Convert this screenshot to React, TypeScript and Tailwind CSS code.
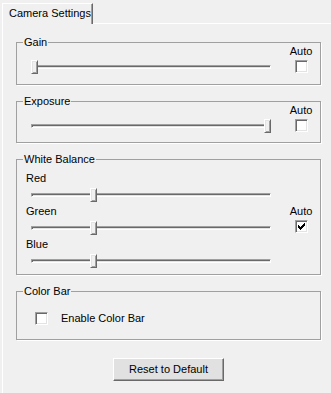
function Slider({ pos }: { pos: number }) {
  return (
    <div className="relative h-[14px] w-[240px]">
      <div className="absolute left-0 right-0 top-[5px] h-[4px] border border-[#a0a0a0] border-b-white border-r-white shadow-[inset_1px_1px_0_#696969,inset_-1px_-1px_0_#e3e3e3]" />
      <div
        className="absolute top-0 h-[14px] w-[7px] border border-white border-r-[#696969] border-b-[#696969] bg-[#f0f0f0] shadow-[inset_1px_1px_0_#e3e3e3,inset_-1px_-1px_0_#a0a0a0]"
        style={{ left: pos }}
      />
    </div>
  );
}

// classic 7x7 check glyph, one rect per row run
const CHECK_ROWS: [number, number, number][] = [
  [0, 6, 1],
  [1, 5, 2],
  [2, 0, 1],
  [2, 4, 3],
  [3, 0, 2],
  [3, 3, 3],
  [4, 0, 5],
  [5, 1, 3],
  [6, 2, 1],
];

function CheckBox({ checked = false }: { checked?: boolean }) {
  return (
    <div className="flex h-[13px] w-[13px] items-center justify-center border border-[#a0a0a0] border-b-white border-r-white bg-white shadow-[inset_1px_1px_0_#696969,inset_-1px_-1px_0_#e3e3e3]">
      {checked && (
        <svg width="7" height="7" viewBox="0 0 7 7" className="block" shapeRendering="crispEdges">
          {CHECK_ROWS.map(([y, x, w], i) => (
            <rect key={i} x={x} y={y} width={w} height={1} fill="#000" />
          ))}
        </svg>
      )}
    </div>
  );
}

function AutoBox({ checked = false }: { checked?: boolean }) {
  return (
    <div className="flex w-[26px] flex-col items-center gap-[2px]">
      <span className="leading-[13px]">Auto</span>
      <CheckBox checked={checked} />
    </div>
  );
}

function Group({ title, height, children }: { title: string; height: string; children: React.ReactNode }) {
  return (
    <fieldset className={`w-[305px] border border-[#a0a0a0] shadow-[1px_1px_0_white] ${height}`}>
      <legend className="ml-[6px] px-[1px] leading-[13px]">{title}</legend>
      {children}
    </fieldset>
  );
}

export default function App() {
  return (
    <div className="h-[393px] w-[331px] overflow-hidden bg-[#f0f0f0] pl-[2px] pt-[3px] font-['Liberation_Sans',sans-serif] text-[11px] text-black">
      <div className="flex items-end">
        <div className="h-[21px] w-[91px] border-l border-t border-white border-r border-r-[#696969] pl-[6px] pt-[3px] leading-[13px] shadow-[inset_-1px_0_0_#a0a0a0]">
          Camera Settings
        </div>
        <div className="h-px flex-1 bg-white" />
      </div>
      <div className="flex h-[400px] flex-col gap-[10px] border-l border-white pl-[13px] pt-[12px]">
        <Group title="Gain" height="h-[49px]">
          <div className="flex items-start">
            <div className="ml-[14px] mt-[11px]">
              <Slider pos={0} />
            </div>
            <div className="-mt-[4px] ml-[17px]">
              <AutoBox />
            </div>
          </div>
        </Group>
        <Group title="Exposure" height="h-[48px]">
          <div className="flex items-start">
            <div className="ml-[14px] mt-[11px]">
              <Slider pos={233} />
            </div>
            <div className="-mt-[4px] ml-[17px]">
              <AutoBox />
            </div>
          </div>
        </Group>
        <Group title="White Balance" height="h-[122px]">
          <div className="flex items-center">
            <div className="flex flex-col pl-[9px] pt-[6px]">
              {['Red', 'Green', 'Blue'].map((c) => (
                <div key={c} className="flex flex-col">
                  <span className="leading-[13px]">{c}</span>
                  <div className="ml-[5px] mb-[3px] mt-[3px]">
                    <Slider pos={59} />
                  </div>
                </div>
              ))}
            </div>
            <div className="ml-[17px]">
              <AutoBox checked />
            </div>
          </div>
        </Group>
        <Group title="Color Bar" height="h-[55px]">
          <div className="flex items-center pl-[18px] pt-[14px]">
            <CheckBox />
            <span className="ml-[13px] leading-[13px]">Enable Color Bar</span>
          </div>
        </Group>
        <div className="flex w-[305px] justify-center pt-[8px]">
          <button className="h-[23px] w-[111px] border border-white border-b-[#696969] border-r-[#696969] bg-[#e1e1e1] leading-[13px] shadow-[inset_-1px_-1px_0_#a0a0a0]">
            Reset to Default
          </button>
        </div>
      </div>
    </div>
  );
}
